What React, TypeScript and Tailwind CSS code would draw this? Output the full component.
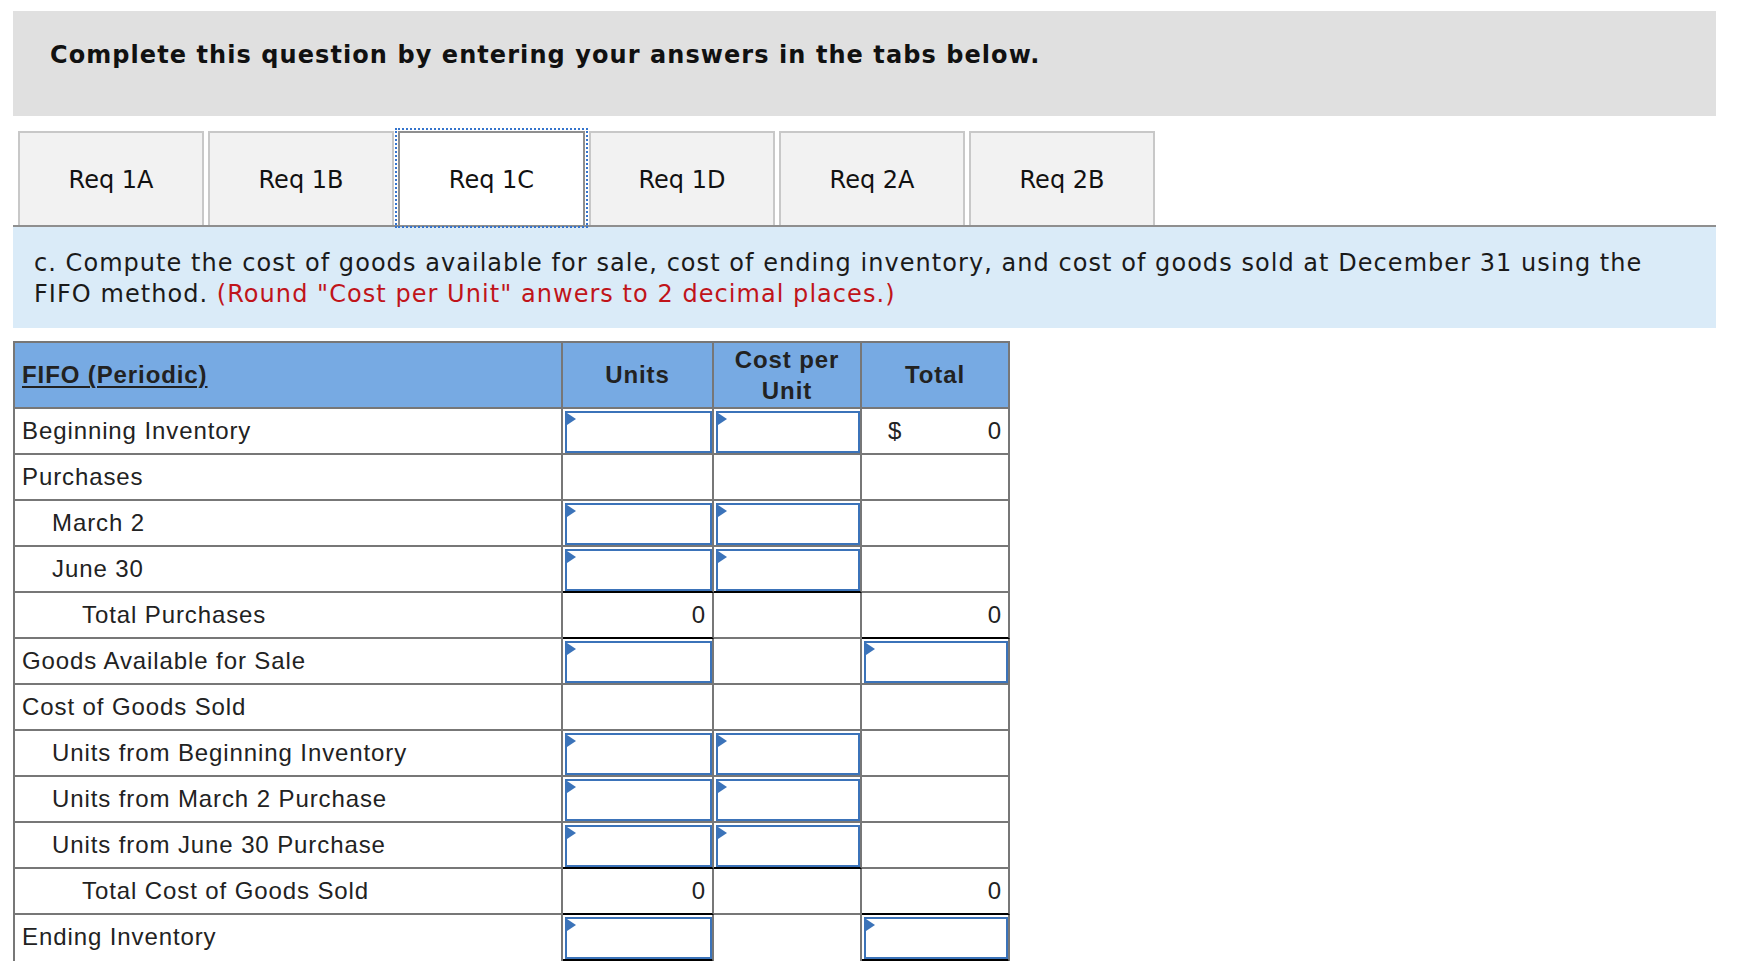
import React from "react";

const BLUE = "border-[#3b73b9]";

function Flag() {
  return (
    <span className="absolute left-0 top-0 h-0 w-0 border-y-[6.5px] border-l-[9px] border-y-transparent border-l-[#3b73b9]" />
  );
}

function Input() {
  return (
    <div className="h-full w-full pl-[2px] pt-[2px]">
      <div className={`relative h-[42px] w-full border-2 ${BLUE} bg-white`}>
        <Flag />
      </div>
    </div>
  );
}

type Cell =
  | { kind: "empty" }
  | { kind: "input" }
  | { kind: "num"; v: string; dollar?: boolean };

type Row = {
  label: string;
  level: 0 | 1 | 2;
  u: Cell;
  c: Cell;
  t: Cell;
  bottom?: { u?: string; c?: string; t?: string };
  last?: boolean;
};

const E: Cell = { kind: "empty" };
const I: Cell = { kind: "input" };

const BLACK = "border-b-[2px] border-b-black";
const DOUBLE = "border-b-[6px] border-b-black border-double";

const rows: Row[] = [
  { label: "Beginning Inventory", level: 0, u: I, c: I, t: { kind: "num", v: "0", dollar: true } },
  { label: "Purchases", level: 0, u: E, c: E, t: E },
  { label: "March 2", level: 1, u: I, c: I, t: E },
  { label: "June 30", level: 1, u: I, c: I, t: E, bottom: { u: BLACK, c: BLACK } },
  { label: "Total Purchases", level: 2, u: { kind: "num", v: "0" }, c: E, t: { kind: "num", v: "0" }, bottom: { u: BLACK, t: BLACK } },
  { label: "Goods Available for Sale", level: 0, u: I, c: E, t: I },
  { label: "Cost of Goods Sold", level: 0, u: E, c: E, t: E },
  { label: "Units from Beginning Inventory", level: 1, u: I, c: I, t: E },
  { label: "Units from March 2 Purchase", level: 1, u: I, c: I, t: E },
  { label: "Units from June 30 Purchase", level: 1, u: I, c: I, t: E, bottom: { u: BLACK, c: BLACK } },
  { label: "Total Cost of Goods Sold", level: 2, u: { kind: "num", v: "0" }, c: E, t: { kind: "num", v: "0" }, bottom: { u: BLACK, t: BLACK } },
  { label: "Ending Inventory", level: 0, u: I, c: E, t: I, bottom: { u: DOUBLE, t: DOUBLE }, last: true },
];

function renderCell(cell: Cell) {
  if (cell.kind === "input") return <Input />;
  if (cell.kind === "num")
    return (
      <div className="flex h-full items-center justify-between pl-[26px] pr-[6px]">
        <span>{cell.dollar ? "$" : ""}</span>
        <span>{cell.v}</span>
      </div>
    );
  return null;
}

const pad = ["pl-[7px]", "pl-[37px]", "pl-[67px]"];

export default function App() {
  return (
    <div className="h-[961px] w-[1746px] overflow-hidden bg-white pl-[13px] pr-[30px] pt-[11px]">
      <div className="h-[105px] bg-[#e0e0e0] pl-[37px] pt-[29px]">
        <div className="text-[24px] font-bold leading-[30px] tracking-[1.07px] text-[#111]" style={{ fontFamily: '"DejaVu Sans", Verdana, sans-serif' }}>
          Complete this question by entering your answers in the tabs below.
        </div>
      </div>

      <div className="mt-[15px] flex gap-[4px] pl-[5px]" style={{ fontFamily: '"DejaVu Sans", Verdana, sans-serif' }}>
        {["Req 1A", "Req 1B", "Req 1C", "Req 1D", "Req 2A", "Req 2B"].map((t) => {
          const sel = t === "Req 1C";
          return (
            <div
              key={t}
              className={
                sel
                  ? "flex h-[94px] w-[187px] items-center justify-center border-2 border-b-0 border-[#8f8f8f] bg-white pt-[2px] text-[24px] text-[#111] outline-2 outline-offset-[1px] outline-dotted outline-[#3574cc]"
                  : "flex h-[94px] w-[186px] items-center justify-center border-2 border-b-0 border-[#c8c8c8] bg-[#f2f2f2] pt-[2px] text-[24px] text-[#111]"
              }
            >
              {t}
            </div>
          );
        })}
      </div>

      <div className="h-[103px] border-t-2 border-[#8f8f8f] bg-[#daebf8] pl-[21px] pt-[21px]" style={{ fontFamily: '"DejaVu Sans", Verdana, sans-serif' }}>
        <p className="text-[24px] leading-[31px] tracking-[1.05px] text-[#1a1a1a]">
          c. Compute the cost of goods available for sale, cost of ending inventory, and cost of goods sold at December 31 using the
          <br />
          FIFO method. <span className="text-[#c0141a]">(Round "Cost per Unit" anwers to 2 decimal places.)</span>
        </p>
      </div>

      <div className="mt-[13px] w-[997px]" style={{ fontFamily: '"Liberation Sans", Arial, sans-serif' }}>
        <table className="w-full border-separate border-spacing-0 border-l-2 border-t-2 border-[#777] text-[24px] tracking-[0.9px] text-[#222]">
          <colgroup>
            <col className="w-[548px]" />
            <col className="w-[151px]" />
            <col className="w-[148px]" />
            <col className="w-[148px]" />
          </colgroup>
          <thead>
            <tr className="h-[66px] bg-[#77aae3]">
              <th className="border-b-2 border-r-2 border-[#777] pl-[7px] text-left font-bold">
                <span className="underline decoration-2 underline-offset-[3px]">FIFO (Periodic)</span>
              </th>
              <th className="border-b-2 border-r-2 border-[#777] font-bold">Units</th>
              <th className="border-b-2 border-r-2 border-[#777] font-bold leading-[31px]">
                Cost per
                <br />
                Unit
              </th>
              <th className="border-b-2 border-r-2 border-[#777] font-bold">Total</th>
            </tr>
          </thead>
          <tbody>
            {rows.map((r) => (
              <tr key={r.label} className="h-[46px]">
                <td className={`border-b-2 border-r-2 border-[#777] p-0 ${pad[r.level]} ${r.last ? "pb-[4px]" : ""} whitespace-nowrap leading-none`}>
                  {r.label}
                </td>
                <td className={`h-[46px] border-b-2 border-r-2 border-[#777] p-0 align-top ${r.bottom?.u ?? ""}`}>{renderCell(r.u)}</td>
                <td className={`h-[46px] border-b-2 border-r-2 border-[#777] p-0 align-top ${r.bottom?.c ?? ""}`}>{renderCell(r.c)}</td>
                <td className={`h-[46px] border-b-2 border-r-2 border-[#777] p-0 align-top ${r.bottom?.t ?? ""}`}>{renderCell(r.t)}</td>
              </tr>
            ))}
          </tbody>
        </table>
      </div>
    </div>
  );
}
